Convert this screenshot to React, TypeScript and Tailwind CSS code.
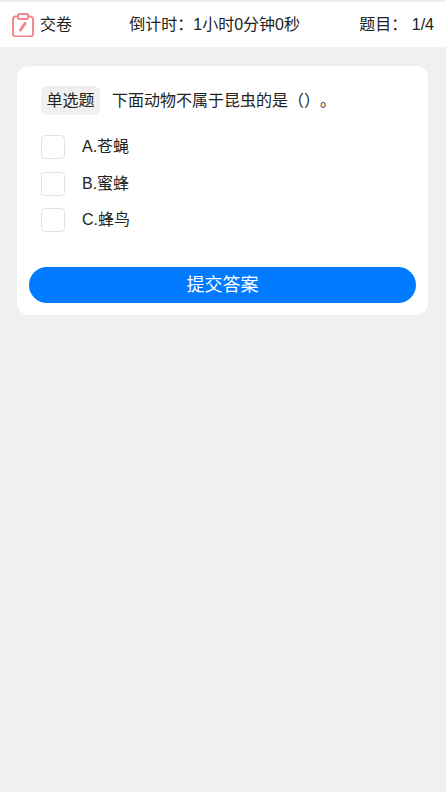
export default function App() {
  const opts = ["A.苍蝇", "B.蜜蜂", "C.蜂鸟"];
  return (
    <div className="min-h-[792px] bg-[#f0f0f0] pt-[2px] text-[16px] text-[#222222] [text-spacing-trim:space-all] font-['Liberation_Sans','Noto_Sans_CJK_SC',sans-serif]">
      <header className="h-[45px] bg-white flex items-center justify-between pl-[12px] pr-[12px] pt-[1px]">
        <div className="flex items-center gap-[6px]">
          <svg width="22" height="24" viewBox="0 0 22 24" fill="none" stroke="#f5878c" strokeWidth="2">
            <path d="M6 3.5H3.5A2.5 2.5 0 0 0 1 6v15a2.5 2.5 0 0 0 2.5 2.5h15A2.5 2.5 0 0 0 21 21V6a2.5 2.5 0 0 0-2.5-2.5H16" />
            <rect x="6" y="1" width="10" height="5" rx="1.5" />
            <path d="M8.5 17L13 10.5" strokeWidth="3" strokeLinecap="round" />
          </svg>
          <span>交卷</span>
        </div>
        <span className="mr-[2px]">倒计时：1小时0分钟0秒</span>
        <span>题目： 1/4</span>
      </header>
      <main className="ml-[17px] mr-[18px] mt-[19px] h-[249px] rounded-[12px] bg-white px-[12px] pt-[20px]">
        <div className="flex items-center pl-[12px]">
          <span className="h-[29px] w-[59px] rounded-[6px] bg-[#f0f0f0] flex items-center justify-center">单选题</span>
          <span className="ml-[12px]">下面动物不属于昆虫的是（）。</span>
        </div>
        <div className="mt-[20px] pl-[12px] flex flex-col gap-[12.5px]">
          {opts.map((o) => (
            <div key={o} className="flex items-center gap-[17px]">
              <span className="size-[24px] rounded-[4px] border border-[#e3e3e3] bg-white" />
              <span>{o}</span>
            </div>
          ))}
        </div>
        <button className="mt-[35px] h-[36px] w-full rounded-full bg-[#007aff] text-white text-[18px] flex items-center justify-center">提交答案</button>
      </main>
    </div>
  );
}
